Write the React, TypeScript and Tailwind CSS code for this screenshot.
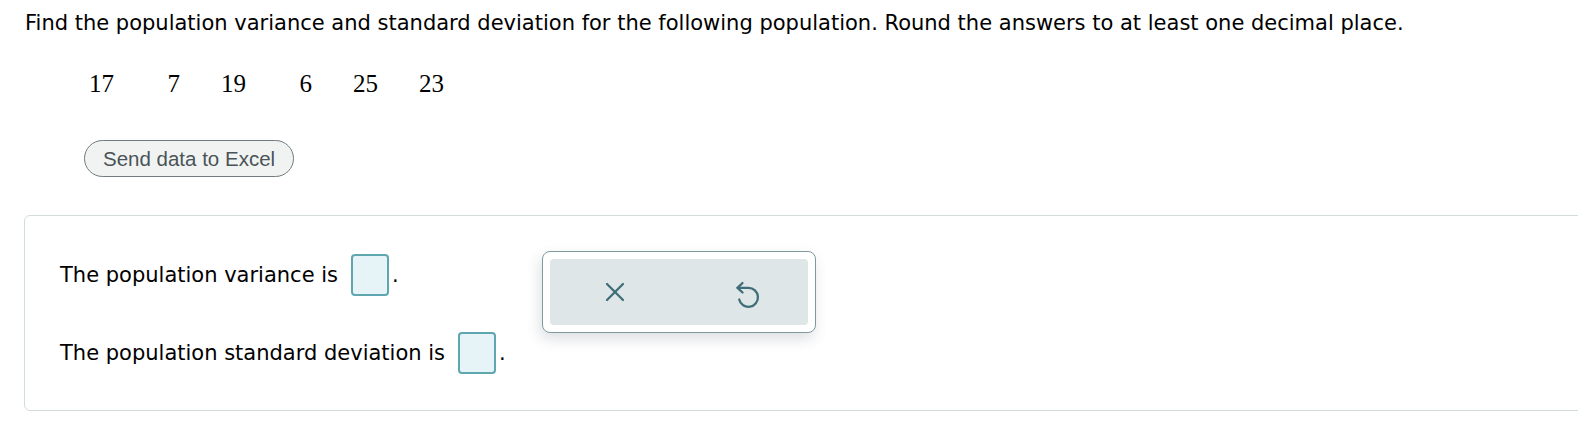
import React from "react";

const numbers = [17, 7, 19, 6, 25, 23];

const AnswerBox: React.FC = () => (
    <span className="block w-[38px] h-[42px] rounded-[4px] border-2 border-[#5ea6b0] bg-[#e6f4f8]"></span>
);

const UndoIcon: React.FC = () => (
    <svg width="36" height="36" viewBox="0 0 36 36" fill="none" stroke="#3e6e78" strokeWidth="2.3" strokeLinecap="round" strokeLinejoin="round">
        <path d="M11.5 13.8 H22.5 A9.5 9.5 0 1 1 13.2 25.5" />
        <path d="M16.5 9 L11.5 13.8 L16.5 18.5" />
    </svg>
);

const XIcon: React.FC = () => (
    <svg width="20" height="20" viewBox="0 0 20 20" fill="none" stroke="#3e6e78" strokeWidth="2.3" strokeLinecap="round">
        <path d="M2 2 L18 18" />
        <path d="M18 2 L2 18" />
    </svg>
);

export default function App() {
    return (
        <div className="w-[1578px] h-[432px] overflow-hidden bg-white font-['DejaVu_Sans',sans-serif] text-[21px] text-black">
            <div className="pl-[25px] pt-[10px]">
                <p className="leading-[27px]">
                    Find the population variance and standard deviation for the following population. Round the answers to at least one decimal place.
                </p>
                <div className="flex ml-[23px] mt-[32px] font-['Liberation_Serif',serif] text-[25px] leading-[29px]">
                    {numbers.map((n, i) => (
                        <div key={i} className="w-[66px] text-right">{n}</div>
                    ))}
                </div>
                <button className="block ml-[59px] mt-[42px] h-[37px] px-[18px] rounded-full border border-[#6f7b7e] bg-[#f1f3f3] text-[#4a5357] font-['Liberation_Sans',sans-serif] text-[20.5px] leading-[35px]">
                    Send data to Excel
                </button>
            </div>
            <div className="ml-[24px] mt-[38px] w-[1600px] h-[196px] border border-[#d3dcdd] rounded-[6px] flex">
                <div className="w-[517px] pl-[35px] pt-[38px]">
                    <div className="flex items-center h-[42px]">
                        <span className="pt-[2px]">The population variance is</span>
                        <span className="ml-[13px]"><AnswerBox /></span>
                        <span className="ml-[3px] pt-[2px]">.</span>
                    </div>
                    <div className="flex items-center h-[42px] mt-[36px]">
                        <span className="pt-[2px]">The population standard deviation is</span>
                        <span className="ml-[13px]"><AnswerBox /></span>
                        <span className="ml-[3px] pt-[2px]">.</span>
                    </div>
                </div>
                <div className="mt-[35px] w-[274px] h-[82px] rounded-[8px] border border-[#7e9aa0] bg-white p-[7px] shadow-[-2px_6px_14px_rgba(60,80,90,0.18)]">
                    <div className="flex h-full rounded-[4px] bg-[#dfe6e8]">
                        <div className="flex-1 flex items-center justify-center"><XIcon /></div>
                        <div className="flex-1 flex items-center justify-center"><UndoIcon /></div>
                    </div>
                </div>
            </div>
        </div>
    );
}
